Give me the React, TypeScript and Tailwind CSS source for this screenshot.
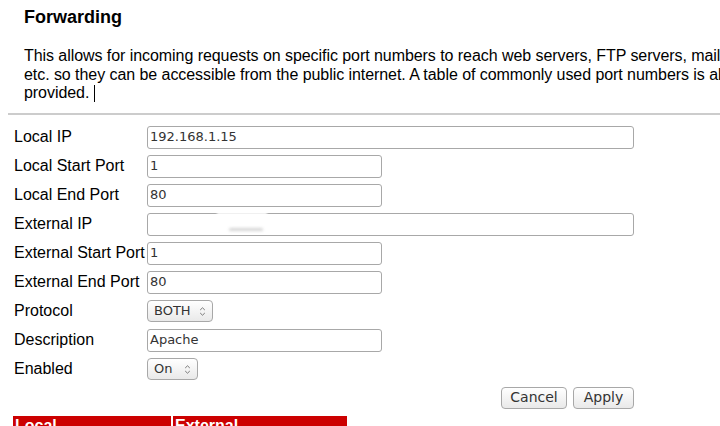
import React from "react";

const arial = { fontFamily: '"Liberation Sans", Arial, sans-serif' };

function Arrows() {
  return (
    <svg width="7" height="11" viewBox="0 0 7 11" className="shrink-0">
      <path d="M1.2 4 L3.5 1.8 L5.8 4" fill="none" stroke="#777" strokeWidth="1" />
      <path d="M1.2 7 L3.5 9.2 L5.8 7" fill="none" stroke="#777" strokeWidth="1" />
    </svg>
  );
}

function TextInput({ value, wide }: { value: string; wide?: boolean }) {
  return (
    <div
      className={`${wide ? "w-[487px]" : "w-[235px]"} h-[23px] border border-[#a8a8a8] rounded-[3px] bg-white flex items-center pl-[2px] text-[13px] text-[#333] font-['DejaVu_Sans',sans-serif]`}
    >
      {value}
    </div>
  );
}

function Select({ value, width }: { value: string; width: string }) {
  return (
    <div
      className={`${width} h-[22px] border border-[#a8a8a8] rounded-[4px] bg-linear-to-b from-[#ffffff] to-[#e9e9e9] flex items-center justify-between pl-[6px] pr-[6px] text-[13px] text-[#333] font-['DejaVu_Sans',sans-serif]`}
    >
      <span>{value}</span>
      <Arrows />
    </div>
  );
}

function Row({ label, children }: { label: string; children: React.ReactNode }) {
  return (
    <>
      <div className="h-[23px] flex items-center text-[16px] text-black whitespace-nowrap">{label}</div>
      <div className="h-[23px] flex items-center">{children}</div>
    </>
  );
}

export default function App() {
  return (
    <div className="w-[720px] h-[426px] overflow-hidden bg-white" style={arial}>
      <h2 className="pl-[24px] pt-[7px] text-[18px] font-bold leading-[20px] text-black">Forwarding</h2>
      <p className="mt-[20px] pl-[24px] text-[16px] leading-[18.5px] tracking-[-0.06px] whitespace-nowrap text-black">
        This allows for incoming requests on specific port numbers to reach web servers, FTP servers, mail servers,
        <br />
        etc. so they can be accessible from the public internet. A table of commonly used port numbers is also
        <br />
        provided. <span className="inline-block w-px h-[17px] bg-black align-[-4px]"></span>
      </p>
      <div className="mt-[10px] ml-[8px] h-[2px] bg-[#cccccc]"></div>
      <div className="pt-[11px] pl-[14px] grid grid-cols-[133px_1fr] gap-y-[6px]">
        <Row label="Local IP">
          <TextInput value="192.168.1.15" wide />
        </Row>
        <Row label="Local Start Port">
          <TextInput value="1" />
        </Row>
        <Row label="Local End Port">
          <TextInput value="80" />
        </Row>
        <Row label="External IP">
          <div className="relative">
            <TextInput value="" wide />
            <div className="absolute left-[70px] top-[-1px] w-[50px] h-[3px] bg-white blur-[1px]"></div>
            <div className="absolute left-[82px] top-[15px] w-[34px] h-[3px] rounded-full bg-[#d4d4d4] blur-[1.5px]"></div>
          </div>
        </Row>
        <Row label="External Start Port">
          <TextInput value="1" />
        </Row>
        <Row label="External End Port">
          <TextInput value="80" />
        </Row>
        <Row label="Protocol">
          <Select value="BOTH" width="w-[66px]" />
        </Row>
        <Row label="Description">
          <TextInput value="Apache" />
        </Row>
        <Row label="Enabled">
          <Select value="On" width="w-[51px]" />
        </Row>
      </div>
      <div className="mt-[6px] ml-[14px] w-[620px] flex justify-end gap-[6px]">
        <button className="w-[66px] h-[22px] border border-[#a8a8a8] rounded-[4px] bg-linear-to-b from-[#ffffff] to-[#e9e9e9] text-[14px] text-[#333] font-['DejaVu_Sans',sans-serif] flex items-center justify-center">
          Cancel
        </button>
        <button className="w-[61px] h-[22px] border border-[#a8a8a8] rounded-[4px] bg-linear-to-b from-[#ffffff] to-[#e9e9e9] text-[14px] text-[#333] font-['DejaVu_Sans',sans-serif] flex items-center justify-center">
          Apply
        </button>
      </div>
      <div className="mt-[7px] ml-[13px] flex gap-[2px]">
        <div className="w-[158px] h-[30px] bg-[#cc0000] text-white font-bold text-[16px] pl-[2px] pt-[1px] leading-[18px]">Local</div>
        <div className="w-[174px] h-[30px] bg-[#cc0000] text-white font-bold text-[16px] pl-[2px] pt-[1px] leading-[18px]">External</div>
      </div>
    </div>
  );
}
